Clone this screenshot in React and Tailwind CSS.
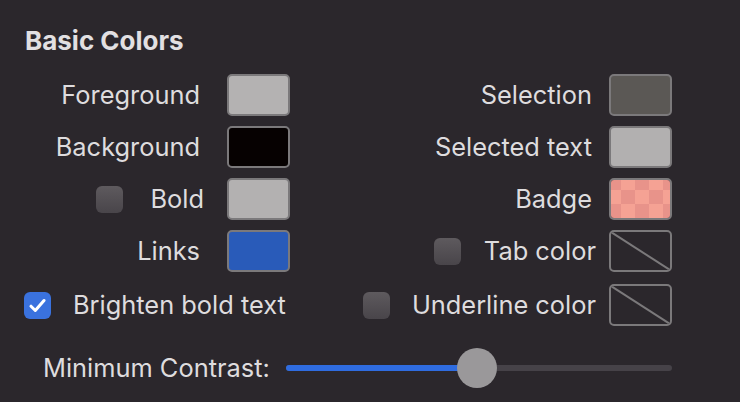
import React from 'react';

const font = { fontFamily: 'Inter, "Liberation Sans", sans-serif' };

const Swatch = ({ className = '', children }) => (
  <div className={`w-[63px] h-[42px] rounded-[5px] border-2 border-[#7b797b] overflow-hidden shrink-0 ${className}`}>
    {children}
  </div>
);

const NoColor = () => (
  <svg width="100%" height="100%" viewBox="0 0 59 38" preserveAspectRatio="none">
    <line x1="0" y1="0" x2="59" y2="38" stroke="#7b797b" strokeWidth="2" />
  </svg>
);

const Checker = () => (
  <svg width="100%" height="100%">
    <defs>
      <pattern id="chk" x="-4" y="-4" width="28" height="28" patternUnits="userSpaceOnUse">
        <rect width="28" height="28" fill="#f5a294" />
        <rect width="14" height="14" fill="#e8938a" />
        <rect x="14" y="14" width="14" height="14" fill="#e8938a" />
      </pattern>
    </defs>
    <rect width="100%" height="100%" fill="url(#chk)" />
  </svg>
);

const Checkbox = ({ checked }) =>
  checked ? (
    <div className="w-[27px] h-[27px] rounded-[6px] bg-[#3a72de] flex items-center justify-center shrink-0">
      <svg width="17" height="15" viewBox="0 0 17 15">
        <path d="M2 8.2 L6.3 12.5 L15 2.5" fill="none" stroke="white" strokeWidth="3" strokeLinecap="round" strokeLinejoin="round" />
      </svg>
    </div>
  ) : (
    <div className="w-[27px] h-[27px] rounded-[6px] bg-gradient-to-b from-[#5e5a5e] to-[#49454a] shrink-0" />
  );

export default function App() {
  return (
    <div className="w-[740px] h-[402px] bg-[#2b272c] text-[#dedcde] overflow-hidden" style={font}>
      <div className="pt-[26px]">
        <div className="pl-[25px] text-[26px] leading-[30px] font-bold text-[#e2e0e2]">Basic Colors</div>

        <div className="mt-[18px] flex flex-col gap-[10px] text-[25.4px] leading-[30px]">
          {/* row 1 */}
          <div className="flex items-center h-[42px]">
            <div className="w-[200px] text-right">Foreground</div>
            <Swatch className="ml-[27px] bg-[#b4b2b2]" />
            <div className="w-[302px] text-right">Selection</div>
            <Swatch className="ml-[17px] bg-[#5b5855]" />
          </div>
          {/* row 2 */}
          <div className="flex items-center h-[42px]">
            <div className="w-[200px] text-right">Background</div>
            <Swatch className="ml-[27px] bg-[#060101]" />
            <div className="w-[302px] text-right">Selected text</div>
            <Swatch className="ml-[17px] bg-[#b2b0b0]" />
          </div>
          {/* row 3 */}
          <div className="flex items-center h-[42px]">
            <div className="w-[204px] flex items-center justify-end">
              <Checkbox />
              <span className="ml-[27px]">Bold</span>
            </div>
            <Swatch className="ml-[23px] bg-[#b3b1b1]" />
            <div className="w-[302px] text-right">Badge</div>
            <Swatch className="ml-[17px]">
              <Checker />
            </Swatch>
          </div>
          {/* row 4 */}
          <div className="flex items-center h-[42px]">
            <div className="w-[200px] text-right">Links</div>
            <Swatch className="ml-[27px] bg-[#295bb9]" />
            <div className="w-[306px] flex items-center justify-end">
              <Checkbox />
              <span className="ml-[23px]">Tab color</span>
            </div>
            <Swatch className="ml-[13px]">
              <NoColor />
            </Swatch>
          </div>
          {/* row 5 */}
          <div className="flex items-center h-[42px] mt-[2px]">
            <div className="pl-[24px] flex items-center">
              <Checkbox checked />
              <span className="ml-[22px]">Brighten bold text</span>
            </div>
            <div className="flex-1 flex items-center justify-end">
              <Checkbox />
              <span className="ml-[22px]">Underline color</span>
            </div>
            <Swatch className="ml-[13px] mr-[68px]">
              <NoColor />
            </Swatch>
          </div>
          {/* slider */}
          <div className="flex items-center h-[40px] mt-[12px] pl-[43px]">
            <span>Minimum Contrast:</span>
            <div className="ml-auto mr-[68px] w-[386px] h-[6px] rounded-full bg-[#464248] relative">
              <div className="w-[191px] h-full rounded-full bg-[#2f6ce0]" />
              <div className="absolute left-[171px] top-[-17px] w-[40px] h-[40px] rounded-full bg-[#9a989a]" />
            </div>
          </div>
        </div>
      </div>
    </div>
  );
}
